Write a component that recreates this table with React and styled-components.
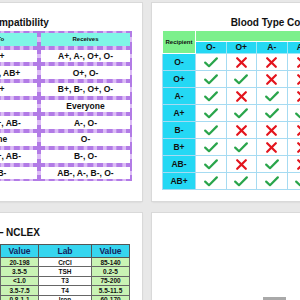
import React from 'react';
import styled, { createGlobalStyle } from 'styled-components';

const GlobalStyle = createGlobalStyle`
  body {
    margin: 0;
    background: #e8e8e8;
    font-family: "Liberation Sans", Arial, sans-serif;
    overflow: hidden;
  }
`;

const Viewport = styled.div`
  position: relative;
  width: 300px;
  height: 300px;
  overflow: hidden;
`;

const SlideGrid = styled.div`
  display: grid;
  grid-template-columns: repeat(2, 306px);
  column-gap: 10px;
  row-gap: 12px;
  margin-left: -164px;
  padding-top: 3px;
`;

const Slide = styled.div`
  background: #ffffff;
  height: 198px;
  box-sizing: border-box;
  padding: 13px 10px 0;
  box-shadow: 0 0 0 1px #d9d9d9, 0 1px 2px rgba(0, 0, 0, 0.12);
`;

const SlideTitle = styled.div`
  text-align: center;
  font-size: 10px;
  font-weight: bold;
  line-height: 13px;
  color: #111;
  margin-bottom: ${(p) => p.$gap || 4}px;
`;

/* compatibility list */
const ListTable = styled.table`
  width: 100%;
  table-layout: fixed;
  border-collapse: separate;
  border-spacing: 0;
  background: #dcbcf6;
`;

const ListCell = styled.td`
  height: 16.7px;
  padding: 0;
  box-sizing: border-box;
  border: 2px dashed #b27be6;
  background: ${(p) => (p.$head ? '#7ff6e6' : '#ffffff')};
  background-clip: padding-box;
  text-align: center;
  font-size: ${(p) => (p.$head ? '6px' : '8.5px')};
  font-weight: bold;
  color: #111;
  white-space: nowrap;
  overflow: hidden;
`;

/* matrix */
const Matrix = styled.table`
  table-layout: fixed;
  border-collapse: collapse;
  width: 277px;
`;

const MHead = styled.th`
  padding: 0;
  height: ${(p) => p.$h}px;
  line-height: ${(p) => p.$h}px;
  background: ${(p) => p.$bg};
  border: 1px solid ${(p) => p.$line || '#9be7f7'};
  font-size: ${(p) => p.$fs || 8.5}px;
  font-weight: bold;
  color: #111;
  text-align: center;
`;

const MRow = styled.tr`
  height: 17px;
`;

const MCell = styled.td`
  padding: 0;
  height: 15px;
  border: 1px solid #a6dbf2;
  background: ${(p) => (p.$side ? '#24d8f4' : '#ffffff')};
  text-align: center;
  vertical-align: middle;
  font-size: 8.5px;
  font-weight: bold;
  color: #111;
  line-height: 10px;

  svg {
    display: block;
    margin: 0 auto;
  }
`;

/* lab values */
const LabTable = styled.table`
  table-layout: fixed;
  border-collapse: collapse;
  width: 283px;
`;

const LabHead = styled.th`
  padding: 0;
  height: 12px;
  line-height: 11px;
  background: #36d5ef;
  border: 1px solid #555;
  font-size: 8.5px;
  font-weight: bold;
  color: #14235e;
  text-align: center;
`;

const LabRow = styled.tr`
  height: 9.4px;
`;

const LabCell = styled.td`
  padding: 0;
  border: 1px solid #666;
  background: ${(p) => (p.$value ? '#c9f4b4' : '#ffffff')};
  font-size: 6.5px;
  font-weight: bold;
  line-height: 7px;
  color: #111;
  text-align: center;
  white-space: nowrap;
  overflow: hidden;
`;

const ScrollThumb = styled.div`
  position: absolute;
  left: 263px;
  top: 297px;
  width: 23px;
  height: 3px;
  background: #a9a9a9;
`;

const Check = () => (
  <svg width="14" height="11" viewBox="0 0 14 11">
    <path d="M1.2 5.6 L5 9.2 L12.8 1.4" fill="none" stroke="#2aa54b" strokeWidth="2.2" strokeLinecap="round" strokeLinejoin="round" />
  </svg>
);

const Cross = () => (
  <svg width="11" height="11" viewBox="0 0 11 11">
    <path d="M1.2 1.2 L9.8 9.8 M9.8 1.2 L1.2 9.8" fill="none" stroke="#e3141d" strokeWidth="2.2" strokeLinecap="round" />
  </svg>
);

const compatList = [
  ['A+', 'A+, AB+', 'A+, A-, O+, O-'],
  ['O+', 'O+, A+, B+, AB+', 'O+, O-'],
  ['B+', 'B+, AB+', 'B+, B-, O+, O-'],
  ['AB+', 'AB+', 'Everyone'],
  ['A-', 'A+, A-, AB+, AB-', 'A-, O-'],
  ['O-', 'Everyone', 'O-'],
  ['B-', 'B+, B-, AB+, AB-', 'B-, O-'],
  ['AB-', 'AB+, AB-', 'AB-, A-, B-, O-'],
];

const types = ['O-', 'O+', 'A-', 'A+', 'B-', 'B+', 'AB-', 'AB+'];

const canReceive = (recipient, donor) => {
  const rAnt = recipient.replace(/[+-]/, '');
  const dAnt = donor.replace(/[+-]/, '');
  const aboOk = dAnt === 'O' || dAnt === rAnt || rAnt === 'AB';
  const rhOk = donor.endsWith('-') || recipient.endsWith('+');
  return aboOk && rhOk;
};

const labs = [
  ['Sodium', '135-145', 'BUN', '20-198', 'CrCl', '85-140'],
  ['Potassium', '3.5-5', 'HbA1c', '3.5-5', 'TSH', '0.2-5'],
  ['Calcium', '9-10.5', 'Digoxin', '<1.0', 'T3', '75-200'],
  ['Magnesium', '1.3-2.1', 'Albumin', '3.5-7.5', 'T4', '5.5-11.5'],
  ['Chloride', '98-106', 'INR', '0.8-1.1', 'Iron', '60-170'],
];

export default function App() {
  return (
    <Viewport>
      <GlobalStyle />
      <SlideGrid>
        <Slide>
          <SlideTitle $gap={2}>Blood Type Compatibility</SlideTitle>
          <ListTable>
            <colgroup>
              <col />
              <col style={{ width: 102 }} />
              <col style={{ width: 93 }} />
            </colgroup>
            <tbody>
              <tr>
                <ListCell $head>Blood Type</ListCell>
                <ListCell $head>Donates To</ListCell>
                <ListCell $head>Receives</ListCell>
              </tr>
              {compatList.map((r) => (
                <tr key={r[0]}>
                  {r.map((c, i) => (
                    <ListCell key={i}>{c}</ListCell>
                  ))}
                </tr>
              ))}
            </tbody>
          </ListTable>
        </Slide>

        <Slide>
          <SlideTitle $gap={1}>Blood Type Compatibility Chart</SlideTitle>
          <Matrix>
            <colgroup>
              <col style={{ width: 33 }} />
              {types.map((t) => (
                <col key={t} style={{ width: 30.5 }} />
              ))}
            </colgroup>
            <thead>
              <tr>
                <MHead rowSpan={2} $h={10} $bg="#7cf08c" $line="#ffffff" $fs={6}>Recipient</MHead>
                <MHead colSpan={8} $h={10} $bg="#7cf08c" $line="#ffffff">Donor</MHead>
              </tr>
              <tr>
                {types.map((t) => (
                  <MHead key={t} $h={11} $bg="#24d8f4">{t}</MHead>
                ))}
              </tr>
            </thead>
            <tbody>
              {types.map((r) => (
                <MRow key={r}>
                  <MCell $side>{r}</MCell>
                  {types.map((d) => (
                    <MCell key={d}>{canReceive(r, d) ? <Check /> : <Cross />}</MCell>
                  ))}
                </MRow>
              ))}
            </tbody>
          </Matrix>
        </Slide>

        <Slide>
          <SlideTitle $gap={5}>Lab Values — NCLEX</SlideTitle>
          <LabTable>
            <colgroup>
              <col style={{ width: 60 }} />
              <col style={{ width: 38 }} />
              <col style={{ width: 56 }} />
              <col style={{ width: 38 }} />
              <col style={{ width: 53 }} />
              <col style={{ width: 38 }} />
            </colgroup>
            <thead>
              <tr>
                <LabHead>Lab</LabHead>
                <LabHead>Value</LabHead>
                <LabHead>Lab</LabHead>
                <LabHead>Value</LabHead>
                <LabHead>Lab</LabHead>
                <LabHead>Value</LabHead>
              </tr>
            </thead>
            <tbody>
              {labs.map((row, ri) => (
                <LabRow key={ri}>
                  {row.map((c, i) => (
                    <LabCell key={i} $value={i % 2 === 1}>{c}</LabCell>
                  ))}
                </LabRow>
              ))}
            </tbody>
          </LabTable>
        </Slide>

        <Slide />
      </SlideGrid>
      <ScrollThumb />
    </Viewport>
  );
}
